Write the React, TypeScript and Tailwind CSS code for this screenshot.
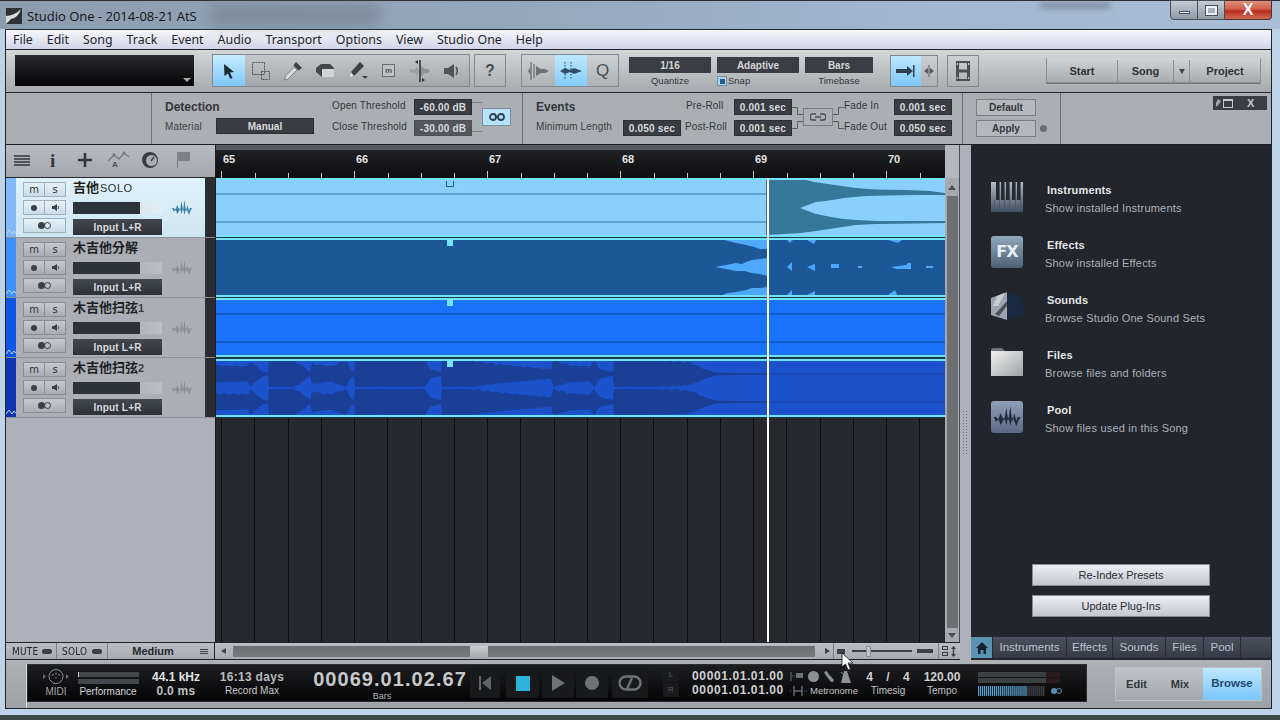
import React from "react";

const cx = (...a: string[]) => a.join(" ");

function envAt(keys: number[][], x: number) {
  for (let i = 0; i < keys.length - 1; i++) {
    if (x >= keys[i][0] && x <= keys[i + 1][0]) {
      const t = (x - keys[i][0]) / (keys[i + 1][0] - keys[i][0] || 1);
      return keys[i][1] + (keys[i + 1][1] - keys[i][1]) * t;
    }
  }
  return 0;
}
function channel(keys: number[][], cy: number, x0: number, x1: number, seed: number) {
  const top: string[] = [];
  const bot: string[] = [];
  for (let x = x0; x <= x1; x += 1) {
    const a = envAt(keys, x);
    const j1 = 0.84 + 0.16 * Math.abs(Math.sin(x * 12.9 + seed));
    const j2 = 0.8 + 0.2 * Math.abs(Math.sin(x * 7.3 + seed * 3));
    top.push(`${x},${(cy - Math.min(a * j1, 13)).toFixed(1)}`);
    bot.unshift(`${x},${(cy + Math.min(a * j2, 13)).toFixed(1)}`);
  }
  return [...top, ...bot].join(" ");
}
const T4 = [[216,9],[248,8],[250,14],[254,10],[262,3],[268,1],[269,15],[292,15],[302,9],[310,2],[312,11],[330,8],[346,14],[350,6],[354,2],[355,15],[400,14],[425,15],[430,5],[441,2],[442,15],[470,14],[500,10],[530,7],[551,5],[553,14],[570,9],[590,8],[594,14],[600,5],[613,2],[614,15],[660,14],[690,12],[705,5],[716,1.5],[767,0.5]].map(([x, a]) => [x - 216, a]);

function Wave1() {
  return (
    <svg className="absolute inset-0" width="729" height="60" viewBox="0 0 729 60">
      <rect x="0" y="15.5" width="551" height="1" fill="#35789a" />
      <rect x="0" y="43.5" width="551" height="1" fill="#35789a" />
      <rect x="550" y="2" width="1" height="55" fill="#35789a" />
      <polygon fill="#35789a" points="551,2 590,2 594,3 598,4 605,5 612,6 626,8 640,10 660,11.5 690,12 714,13 729,15 729,17 700,17 670,17.5 650,18 628,20 610,23 600,24 584,30 600,36 615,39 628,41 640,42 660,43 700,43 729,43 729,45 700,45.5 660,46 640,47 620,50 600,53 585,55 551,57" />
    </svg>
  );
}
function Wave2() {
  return (
    <svg className="absolute inset-0" width="729" height="60" viewBox="0 0 729 60">
      <g fill="#4ea8fb">
        <polygon points="499,29 510,27 520,25 526,26 530,24 536,22 544,21 551,20 551,38 544,36 536,35 528,33 520,33 510,31" />
        <polygon points="509,2 551,2 551,11 544,11 538,9 530,7 520,5 512,3" />
        <polygon points="506,57 551,57 551,49 544,50 536,50 530,52 520,54 512,55" />
        <polygon points="571,29 576,24 576,33" />
        <polygon points="591,29 599,26 599,33" />
        <rect x="615" y="26" width="8" height="4" />
        <rect x="642" y="28" width="4" height="2" />
        <polygon points="675,29 690,27 692,25 695,25 695,31 680,31" />
        <rect x="710" y="28" width="7" height="2" />
        <polygon points="571,2 577,2 574,5" />
        <polygon points="591,2 600,2 598,6" />
        <polygon points="672,2 686,2 682,5" />
        <polygon points="571,57 576,57 576,52" />
        <polygon points="591,57 599,57 599,53" />
        <polygon points="672,57 681,57 679,52" />
      </g>
    </svg>
  );
}
function Wave3() {
  return (
    <svg className="absolute inset-0" width="729" height="60" viewBox="0 0 729 60">
      <rect x="0" y="15.5" width="729" height="1" fill="#12449c" />
      <rect x="0" y="43.5" width="729" height="1" fill="#12449c" />
    </svg>
  );
}
function Wave4() {
  return (
    <svg className="absolute inset-0" width="729" height="60" viewBox="0 0 729 60">
      <rect x="0" y="15.5" width="729" height="1" fill="#1a3f96" />
      <rect x="0" y="43.5" width="729" height="1" fill="#1a3f96" />
      <polygon fill="#1a3f96" points={channel(T4, 16, 0, 551, 1)} />
      <polygon fill="#1a3f96" points={channel(T4, 44, 0, 551, 2)} />
    </svg>
  );
}

function WaveIcon({ color }: { color: string }) {
  return (
    <svg width="20" height="18" viewBox="0 0 20 18">
      <path d="M0 9 L2 9 L3.5 12 L5 6 L6.5 9 L8 12 L9.5 2 L11 12 L12.5 1 L14 13 L15.5 6 L17 12 L18 9 L20 9 L18 13 L17 16 L15.5 12 L14 9 L12.5 16 L11 9 L9.5 15 L8 9 L6.5 13 L5 15 L3.5 9 L2 13 Z" fill={color} />
    </svg>
  );
}

function Track({ name, suffix, strip, head, strong }: { name: string; suffix: string; strip: string; head: string; strong: boolean }) {
  const sb = "border border-[#8a8e93] bg-gradient-to-b from-[#c6c9ce] to-[#a9acb2] flex items-center justify-center";
  const sbA = strong ? "border-[#9fb0b9] from-[#e4f2f8] to-[#c9dde6]" : "";
  return (
    <div className="h-[60px] flex border-b border-[#8d9096]">
      <div className={cx("w-[10px] relative", strip)}>
        <svg className="absolute left-0 bottom-0" width="10" height="9" viewBox="0 0 10 9"><path d="M0 6 L3 2 L6 6 L8 3 L10 5" stroke="#bcd6f5" fill="none" /></svg>
      </div>
      <div className={cx("w-[189px] flex pl-[7px] pt-[4px]", head)}>
        <div className="w-[44px] flex flex-col gap-[3px]">
          <div className="flex h-[15px]">
            <div className={cx("w-[22px] text-[10px] text-[#333] leading-none font-['DejaVu_Sans',sans-serif]", sb, sbA)}>m</div>
            <div className={cx("w-[22px] -ml-px text-[10px] text-[#333] leading-none font-['DejaVu_Sans',sans-serif]", sb, sbA)}>s</div>
          </div>
          <div className="flex h-[15px]">
            <div className={cx("w-[22px]", sb, sbA)}><span className="w-[6px] h-[6px] rounded-full bg-[#3c4046]" /></div>
            <div className={cx("w-[22px] -ml-px", sb, sbA)}>
              <svg width="9" height="9" viewBox="0 0 9 9"><path d="M1 3 H3 L6 1 V8 L3 6 H1 Z" fill="#3c4046" /><path d="M7 3 Q8.2 4.5 7 6" stroke="#3c4046" fill="none" /></svg>
            </div>
          </div>
          <div className={cx("h-[15px] w-[43px] gap-0", sb, sbA)}>
            <span className="w-[7px] h-[7px] rounded-full bg-[#3c4046]" />
            <span className="w-[7px] h-[7px] rounded-full border border-[#3c4046] -ml-px" />
          </div>
        </div>
        <div className="w-[89px] ml-[6px] flex flex-col">
          <div className="h-[16px] leading-[13px] text-[13px] font-bold text-[#1d1f22] font-['Liberation_Sans','Noto_Sans_CJK_TC',sans-serif] whitespace-nowrap -mt-[1px]">
            {name}<span className={suffix === "SOLO" ? "text-[11px] font-normal tracking-[0.5px] ml-[1px] text-[#2b2e33]" : "text-[11px] text-[#3a3d42]"}>{suffix}</span>
          </div>
          <div className={cx("h-[12px] mt-[5px] flex", strong ? "bg-gradient-to-r from-[#c9d8df] to-[#e0eef3]" : "bg-gradient-to-r from-[#92959b] to-[#bcbfc4]")}>
            <div className="w-[67px] bg-[#2e3339]" />
          </div>
          <div className="h-[16px] mt-[5px] bg-gradient-to-b from-[#43474e] to-[#2e3138] text-[#d9dadc] text-[10px] font-bold flex items-center justify-center tracking-[0.2px]">Input L+R</div>
        </div>
        <div className="ml-[10px] mt-[17px] h-[18px]"><WaveIcon color={strong ? "#3b7ea6" : "#8b8e94"} /></div>
      </div>
      <div className="w-[10px] bg-[#2b2d33]" />
    </div>
  );
}

function Clip({ body, children, offset }: { body: string; children: React.ReactNode; offset?: boolean }) {
  return (
    <div className={cx("h-[60px] relative flex flex-col bg-[#123a48]", offset ? "pt-px" : "")}>
      <div className={cx("flex-1 border-t-2 border-b-2 border-[#74e2f7] mb-px", body)} />
      {children}
    </div>
  );
}

function Handle({ hollow, top }: { hollow?: boolean; top: string }) {
  return hollow ? (
    <div className={cx("absolute left-[230px] w-[8px] h-[6px] border-x border-b border-[#1b6a8a] z-10", top)} />
  ) : (
    <div className={cx("absolute left-[231px] w-[6px] h-[6px] bg-[#74e2f7] z-10", top)} />
  );
}

function Ruler() {
  const ticks = Array.from({ length: 24 }, (_, i) => i);
  return (
    <div className="h-[33px] flex flex-col relative overflow-hidden">
      <div className="h-[5px] bg-[#575a62]" />
      <div className="flex-1 bg-gradient-to-b from-[#1f2023] to-[#0f0f11] flex pl-[7px]">
        {["65", "66", "67", "68", "69", "70"].map((n) => (
          <div key={n} className="w-[133px] shrink-0 text-[11px] font-bold text-[#e2e2e2] pt-[3px] leading-[13px]">{n}</div>
        ))}
      </div>
      <svg className="absolute left-0 bottom-0" width="729" height="8" viewBox="0 0 729 8">
        {ticks.map((i) => (
          <rect key={i} x={Math.round(5.3 + i * 33.25)} y={i % 4 === 0 ? 1 : 3} width="1" height={i % 4 === 0 ? 7 : 5} fill="#c9c9c9" />
        ))}
      </svg>
    </div>
  );
}

const toolBtn = "flex items-center justify-center h-full";

function Toolbar() {
  return (
    <div className="h-[43px] flex bg-gradient-to-b from-[#d4d7d8] to-[#a6aaae] border-b border-[#24262a] text-[#33373c] pt-[4px]">
      <div className="w-[179px] h-[31px] ml-[9px] mt-px bg-gradient-to-b from-[#2b2c2f] to-[#060607] relative shrink-0">
        <span className="absolute right-[3px] bottom-[4px] w-0 h-0 border-x-[4px] border-x-transparent border-t-[4px] border-t-[#aaa]" />
      </div>
      <div className="ml-[18px] w-[258px] h-[33px] flex border border-[#85898d] bg-gradient-to-b from-[#c5c8ca] to-[#a3a7ab] shrink-0">
        <div className={cx(toolBtn, "w-[32px] bg-gradient-to-b from-[#c7ebff] to-[#7cc8f9]")}>
          <svg width="14" height="16" viewBox="0 0 14 16"><path d="M2 1 L12 9 L8 9.5 L10.5 15 L8 15.8 L6 10.5 L2.5 13 Z" fill="#1c2a36" /></svg>
        </div>
        <div className={cx(toolBtn, "w-[32px]")}>
          <svg width="20" height="20" viewBox="0 0 20 20" fill="none" stroke="#4b4f54" strokeDasharray="2 1"><rect x="1.5" y="1.5" width="12" height="12" /><rect x="10.5" y="10.5" width="8" height="8" /></svg>
        </div>
        <div className={cx(toolBtn, "w-[32px]")}>
          <svg width="20" height="20" viewBox="0 0 20 20"><path d="M13 1 L19 7 L15.5 9.5 L10.5 4.5 Z" fill="#3c4045" /><path d="M11 6 L14 9 L5 18 L1.5 19 L2.5 15 Z" fill="#d6d8da" stroke="#6d7075" strokeWidth=".8" /></svg>
        </div>
        <div className={cx(toolBtn, "w-[32px]")}>
          <svg width="20" height="16" viewBox="0 0 20 16"><path d="M1 5 L6 1 L15 1 L19 5 L19 14 L7 14 L1 9 Z" fill="#43474c" /><path d="M7 6 H19 V14 H7 Z" fill="#d2d4d6" /></svg>
        </div>
        <div className={cx(toolBtn, "w-[33px]")}>
          <svg width="22" height="20" viewBox="0 0 22 20"><path d="M13 1 L17 5 L7 15 L2 17 L4 11 Z" fill="#3e4247" /><path d="M4 11 L7 15 L2 17 Z" fill="#dfe1e2" /><path d="M15 15 H21 L18 18 Z" fill="#3e4247" /></svg>
        </div>
        <div className={cx(toolBtn, "w-[29px]")}>
          <span className="w-[13px] h-[13px] border border-[#6a6e73] bg-[#bfc2c5] flex items-center justify-center"><span className="text-[8px] leading-none text-[#555] font-bold">m</span></span>
        </div>
        <div className={cx(toolBtn, "w-[33px]")}>
          <svg width="24" height="24" viewBox="0 0 24 24"><rect x="11" y="1" width="2" height="22" fill="#4b4f54" /><path d="M1 12 L4 10 L6 11 L9 8 L11 12 L9 16 L6 13 L4 14 Z" fill="#9a9da1" /><path d="M13 7 L17 10 L20 10 L22 12 L20 14 L17 14 L13 17 Z" fill="#8f9296" /><path d="M10 1 V5 L7 3 Z" fill="#33373c" /><path d="M14 19 V23 L17 21 Z" fill="#33373c" /></svg>
        </div>
        <div className={cx(toolBtn, "w-[32px]")}>
          <svg width="18" height="16" viewBox="0 0 18 16"><path d="M1 5 H5 L11 1 V15 L5 11 H1 Z" fill="#50545a" /><path d="M13 4 Q15.5 8 13 12" stroke="#50545a" strokeWidth="1.6" fill="none" /></svg>
        </div>
      </div>
      <div className="ml-[4px] w-[32px] h-[33px] border border-[#85898d] flex items-center justify-center text-[16px] font-bold text-[#4a4e53] shrink-0">?</div>
      <div className="ml-[15px] w-[98px] h-[33px] flex border border-[#85898d] shrink-0">
        <div className={cx(toolBtn, "w-[33px]")}>
          <svg width="22" height="18" viewBox="0 0 22 18"><path d="M3 0 V18 M6 2 V16" stroke="#5a5e63" /><path d="M0 9 L2.5 5 V13 Z M8 4 L13 7 H17 L21 9 L17 11 H13 L8 14 Z" fill="#6e7277" /></svg>
        </div>
        <div className={cx(toolBtn, "w-[32px] bg-gradient-to-b from-[#bde7ff] to-[#82cdfa]")}>
          <svg width="24" height="18" viewBox="0 0 24 18"><path d="M1 9 L6 6 L11 8 L15 6 L23 9 L15 12 L11 10 L6 12 Z" fill="#33506a" /><path d="M6 0 V18 M12 0 V18" stroke="#2a3a48" strokeDasharray="1.5 1.5" /></svg>
        </div>
        <div className={cx(toolBtn, "flex-1 text-[17px] text-[#4b4f54]")}>Q</div>
      </div>
      <div className="ml-[10px] w-[82px] shrink-0 flex flex-col items-center mt-[3px]">
        <div className="w-full h-[16px] bg-[#3a3e44] text-[#d4d5d6] text-[10px] font-bold flex items-center justify-center">1/16</div>
        <div className="text-[9.5px] mt-[2px] leading-[12px]">Quantize</div>
      </div>
      <div className="ml-[6px] w-[82px] shrink-0 flex flex-col mt-[3px]">
        <div className="w-full h-[16px] bg-[#3a3e44] text-[#d4d5d6] text-[10px] font-bold flex items-center justify-center">Adaptive</div>
        <div className="flex items-center mt-[2px] h-[12px] text-[9.5px]">
          <span className="w-[10px] h-[10px] border border-[#7a8d9b] bg-[#a9d4ee] flex items-center justify-center mr-[1px]"><span className="w-[5px] h-[5px] bg-[#23608f]" /></span>Snap
        </div>
      </div>
      <div className="ml-[6px] w-[68px] shrink-0 flex flex-col items-center mt-[3px]">
        <div className="w-full h-[16px] bg-[#3a3e44] text-[#d4d5d6] text-[10px] font-bold flex items-center justify-center">Bars</div>
        <div className="text-[9.5px] mt-[2px] leading-[12px]">Timebase</div>
      </div>
      <div className="ml-[17px] mt-px w-[48px] h-[32px] flex border border-[#85898d] shrink-0">
        <div className={cx(toolBtn, "w-[30px] bg-gradient-to-b from-[#bde7ff] to-[#7cc8f9]")}>
          <svg width="20" height="12" viewBox="0 0 20 12"><path d="M0 4 H11 V1 L17 6 L11 11 V8 H0 Z" fill="#33404c" /><rect x="17" y="0" width="1.5" height="12" fill="#33404c" /></svg>
        </div>
        <div className={cx(toolBtn, "flex-1")}>
          <svg width="10" height="12" viewBox="0 0 10 12"><path d="M5 0 V12" stroke="#55595e" /><path d="M0 6 L4 3 V9 Z M10 6 L6 3 V9 Z" fill="#55595e" /></svg>
        </div>
      </div>
      <div className="ml-[9px] mt-px w-[32px] h-[32px] border border-[#85898d] flex items-center justify-center shrink-0">
        <svg width="14" height="20" viewBox="0 0 14 20"><path fillRule="evenodd" d="M0 0 H14 V20 H0 Z M3 2 V8.5 H11 V2 Z M3 11.5 V18 H11 V11.5 Z M.8 2 V4 H2 V2 Z M12 2 V4 H13.2 V2 Z M.8 16 V18 H2 V16 Z M12 16 V18 H13.2 V16 Z" fill="#4b4f54" /></svg>
      </div>
      <div className="ml-[67px] w-[215px] h-[25px] mt-[4px] pt-[2px] flex border-x border-b border-[#8b8e92] bg-gradient-to-b from-[#d2d5d6] to-[#a8acaf] text-[11px] font-bold text-[#2e3135] shrink-0 rounded-[1px] shadow-[0_1px_0_#777]">
        <div className="w-[71px] flex items-center justify-center border-r border-[#8b8e92]">Start</div>
        <div className="w-[56px] flex items-center justify-center border-r border-[#8b8e92]">Song</div>
        <div className="w-[16px] flex items-center justify-center border-r border-[#8b8e92]"><span className="w-0 h-0 border-x-[3.5px] border-x-transparent border-t-[5px] border-t-[#41454a]" /></div>
        <div className="flex-1 flex items-center justify-center">Project</div>
      </div>
    </div>
  );
}

const valBox = "bg-[#393d43] border border-[#2a2d31] text-[#d8d9da] text-[10px] font-bold flex items-center justify-center tracking-[0.2px] w-[58px] h-[16px] shrink-0";
const lbl = "text-[10px] text-[#33373c] leading-[12px] whitespace-nowrap tracking-[0.15px]";

function Inspector() {
  return (
    <div className="h-[52px] flex bg-[#abafb4] border-b border-[#1d1f23]">
      <div className="w-[146px] border-r border-[#6f7378] shrink-0" />
      <div className="w-[371px] border-r border-[#6f7378] shrink-0 flex pl-[13px]">
        <div className="w-[149px] shrink-0">
          <div className="text-[12px] font-bold text-[#33373c] mt-[7px] leading-[14px]">Detection</div>
          <div className="flex items-center mt-[4px]">
            <span className="text-[10px] text-[#3c4045] w-[51px] tracking-[0.15px]">Material</span>
            <div className="w-[98px] h-[16px] bg-[#393d43] border border-[#2a2d31] text-[#d8d9da] text-[10px] font-bold flex items-center justify-center">Manual</div>
          </div>
        </div>
        <div className="w-[82px] ml-[18px] pt-[7px] flex flex-col gap-[9px] shrink-0">
          <div className={lbl}>Open Threshold</div>
          <div className={lbl}>Close Threshold</div>
        </div>
        <div className="flex flex-col gap-[5px] pt-[6px] shrink-0">
          <div className={valBox}>-60.00 dB</div>
          <div className={cx(valBox, "bg-[#53575d] text-[#74787d] border-[#4b4f54]")}>-30.00 dB</div>
        </div>
        <div className="ml-[10px] mt-[15px] w-[29px] h-[18px] bg-[#b6e2fa] border border-[#7a8d9b] flex items-center justify-center shrink-0 relative">
          <svg className="absolute -left-[11px] -top-[7px] -z-0" width="27" height="32" viewBox="0 0 27 32" fill="none" stroke="#7b7f84"><path d="M0 .5 H10 M0 29.5 H10" /></svg>
          <svg className="relative" width="16" height="8" viewBox="0 0 16 8" fill="none" stroke="#2d4253" strokeWidth="1.8"><rect x="1" y="1" width="6" height="6" rx="3" /><rect x="9" y="1" width="6" height="6" rx="3" /><path d="M6 4 H10" /></svg>
        </div>
      </div>
      <div className="w-[440px] border-r border-[#6f7378] shrink-0 flex pl-[13px]">
        <div className="w-[87px] shrink-0">
          <div className="text-[12px] font-bold text-[#33373c] mt-[7px] leading-[14px]">Events</div>
          <div className="text-[10px] text-[#3c4045] mt-[7px] leading-[12px] whitespace-nowrap tracking-[0.15px]">Minimum Length</div>
        </div>
        <div className={cx(valBox, "mt-[27px]")}>0.050 sec</div>
        <div className="w-[53px] pl-[4px] pt-[7px] flex flex-col gap-[9px] shrink-0">
          <div className={cx(lbl, "pl-[1px]")}>Pre-Roll</div>
          <div className={lbl}>Post-Roll</div>
        </div>
        <div className="flex flex-col gap-[5px] pt-[6px] shrink-0">
          <div className={valBox}>0.001 sec</div>
          <div className={valBox}>0.001 sec</div>
        </div>
        <svg className="mt-[10px] shrink-0" width="11" height="30" viewBox="0 0 11 30" fill="none" stroke="#5b5f64"><path d="M0 4.5 H5.5 V11.5 H11 M0 25.5 H5.5 V18.5 H11" /></svg>
        <div className="mt-[15px] w-[30px] h-[18px] border border-[#7b7f84] flex items-center justify-center shrink-0">
          <svg width="16" height="8" viewBox="0 0 16 8" fill="none" stroke="#4b4f54" strokeWidth="1.4"><path d="M6 1 H3 A3 3 0 0 0 3 7 H6 M10 1 H13 A3 3 0 0 1 13 7 H10 M5 4 H11" /></svg>
        </div>
        <svg className="mt-[10px] shrink-0" width="11" height="30" viewBox="0 0 11 30" fill="none" stroke="#5b5f64"><path d="M0 11.5 H5.5 V4.5 H11 M0 18.5 H5.5 V25.5 H11" /></svg>
        <div className="w-[50px] pt-[7px] flex flex-col gap-[9px] shrink-0">
          <div className={lbl}>Fade In</div>
          <div className={lbl}>Fade Out</div>
        </div>
        <div className="flex flex-col gap-[5px] pt-[6px] shrink-0">
          <div className={valBox}>0.001 sec</div>
          <div className={valBox}>0.050 sec</div>
        </div>
      </div>
      <div className="w-[98px] border-r border-[#6f7378] shrink-0 pl-[13px] pt-[6px] flex flex-col gap-[4px]">
        <div className="w-[60px] h-[17px] border border-[#7b7f84] bg-[#b5b8bc] text-[10px] font-bold text-[#33373c] flex items-center justify-center">Default</div>
        <div className="w-[60px] h-[17px] border border-[#7b7f84] bg-[#b5b8bc] text-[10px] font-bold text-[#33373c] flex items-center justify-center relative">Apply
          <span className="absolute -right-[12px] top-[4px] w-[7px] h-[7px] rounded-full bg-[#6a6e73]" />
        </div>
      </div>
      <div className="flex-1 flex justify-end pr-[4px] pt-[3px]">
        <div className="w-[54px] h-[14px] bg-[#3a3e44] flex items-center text-[#c7c9cc] pl-[2px]">
          <svg width="7" height="10" viewBox="0 0 7 10"><path d="M3 1 L6 3 L4 6 L1 9 L1 5 Z" fill="#a6a9ad" /></svg>
          <span className="w-[10px] h-[9px] border border-[#c7c9cc] border-t-2 ml-[1px]" />
          <span className="ml-[14px] text-[11px] font-bold leading-none">X</span>
        </div>
      </div>
    </div>
  );
}

function BottomBar() {
  return (
    <div className="h-[18px] flex bg-gradient-to-b from-[#babdc3] to-[#a8abb2] border-y border-[#22242a] text-[#26282c]">
      <div className="w-[51px] border-r border-[#7d8086] flex items-center pl-[6px] text-[10px] tracking-[0.2px] font-['DejaVu_Sans',sans-serif] shrink-0">
        <span className="scale-x-90 origin-left">MUTE</span><span className="w-[10px] h-[5px] bg-[#3c4046] rounded-[2px] ml-[1px]" />
      </div>
      <div className="w-[51px] border-r border-[#7d8086] flex items-center pl-[5px] text-[10px] tracking-[0.2px] font-['DejaVu_Sans',sans-serif] shrink-0">
        <span className="scale-x-90 origin-left">SOLO</span><span className="w-[10px] h-[5px] bg-[#3c4046] rounded-[2px] ml-[2px]" />
      </div>
      <div className="w-[107px] border-r border-[#22242a] flex items-center shrink-0">
        <span className="w-[90px] text-center text-[11px] font-bold">Medium</span>
        <span className="w-[8px] ml-[2px] flex flex-col gap-px">
          <span className="h-px bg-[#3c4046]" /><span className="h-px bg-[#3c4046]" /><span className="h-px bg-[#3c4046]" />
        </span>
      </div>
      <div className="w-[618px] flex items-center shrink-0 pl-[6px] gap-[4px]">
        <span className="w-0 h-0 border-y-[3.5px] border-y-transparent border-r-[5px] border-r-[#3f4348]" />
        <div className="w-[582px] ml-[3px] h-[11px] bg-gradient-to-b from-[#6b6e72] to-[#77797d] flex pl-[237px]">
          <div className="w-[18px] h-full bg-gradient-to-b from-[#c9ccd0] to-[#a9acb0]" />
        </div>
        <span className="w-0 h-0 border-y-[3.5px] border-y-transparent border-l-[5px] border-l-[#3f4348] ml-[6px]" />
      </div>
      <div className="w-[127px] border-l border-[#7d8086] flex items-center pl-[3px] shrink-0">
        <span className="w-[8px] h-[5px] bg-[#3c4046] shrink-0" />
        <div className="w-[60px] h-[2px] bg-[#3c4046] ml-[7px] flex pl-[14px] items-center shrink-0">
          <span className="w-[5px] h-[11px] bg-[#c3c6c9] border border-[#8a8d92] shrink-0" />
        </div>
        <span className="w-[16px] h-[4px] bg-[#3c4046] ml-[5px] shrink-0" />
        <span className="h-full border-l border-[#7d8086] ml-[5px] flex items-center pl-[3px] gap-[2px] shrink-0">
          <svg width="7" height="10" viewBox="0 0 7 10" fill="none" stroke="#3c4046"><rect x=".5" y=".5" width="5" height="3" /><rect x=".5" y="6.5" width="5" height="3" /></svg>
          <svg width="5" height="11" viewBox="0 0 5 11"><path d="M2.5 0 L5 3 H3.2 V8 H5 L2.5 11 L0 8 H1.8 V3 H0 Z" fill="#3c4046" /></svg>
        </span>
      </div>
    </div>
  );
}

function RightPanel() {
  const items: [string, string, React.ReactNode][] = [
    ["Instruments", "Show installed Instruments", (
      <svg width="32" height="32" viewBox="0 0 32 32">
        <defs><linearGradient id="pk" x1="0" y1="0" x2="0" y2="1"><stop offset="0" stopColor="#b4bcc6" /><stop offset="1" stopColor="#3f4f63" /></linearGradient></defs>
        <rect x="0" y="1" width="32" height="30" fill="url(#pk)" />
        {[5, 10, 15, 21, 26].map((x) => <rect key={x} x={x} y="1" width="3.6" height="18" fill="#262a31" />)}
        {[3, 8, 13, 18, 24, 29].map((x) => <rect key={x} x={x} y="19" width=".8" height="12" fill="#4b5563" />)}
      </svg>
    )],
    ["Effects", "Show installed Effects", (
      <div className="w-[32px] h-[32px] rounded-[3px] bg-gradient-to-b from-[#90a8bd] to-[#4e6275] flex items-center justify-center text-[#e6eef5] text-[16px] font-black leading-none font-['DejaVu_Sans',sans-serif] tracking-[-1px]">FX</div>
    )],
    ["Sounds", "Browse Studio One Sound Sets", (
      <svg width="32" height="30" viewBox="0 0 32 30">
        <path d="M0 6 L16 0 L16 28 L0 23 Z" fill="#9ea4ab" />
        <path d="M16 0 L32 6 L32 23 L16 28 Z" fill="#1a2a42" />
        <path d="M4 22 L16 9 L16 14 L8 24 Z" fill="#4d5157" />
        <path d="M6 4 L14 1 L7 14 L2 14 Z" fill="#c9cdd2" />
      </svg>
    )],
    ["Files", "Browse files and folders", (
      <svg width="32" height="28" viewBox="0 0 32 28">
        <defs><linearGradient id="fo" x1="0" y1="0" x2="1" y2="1"><stop offset="0" stopColor="#f0f0f0" /><stop offset="1" stopColor="#9fa2a5" /></linearGradient></defs>
        <path d="M0 2 Q0 0 2 0 H11 L14 3 V6 H0 Z" fill="#6e7277" />
        <rect x="0" y="3" width="32" height="25" fill="url(#fo)" />
      </svg>
    )],
    ["Pool", "Show files used in this Song", (
      <div className="w-[32px] h-[32px] rounded-[3px] bg-gradient-to-b from-[#8fa0b8] to-[#5a6a85] flex items-center justify-center">
        <svg width="28" height="24" viewBox="0 0 20 18"><path d="M0 9 L2 9 L3.5 12 L5 6 L6.5 9 L8 12 L9.5 2 L11 12 L12.5 1 L14 13 L15.5 6 L17 12 L18 9 L20 9 L18 13 L17 16 L15.5 12 L14 9 L12.5 16 L11 9 L9.5 15 L8 9 L6.5 13 L5 15 L3.5 9 L2 13 Z" fill="#1f2a3d" /></svg>
      </div>
    )],
  ];
  return (
    <div className="flex-1 flex flex-col bg-[#22252c] min-w-0">
      <div className="flex-1 flex flex-col pt-[36px] pl-[20px]">
        {items.map(([t, s, icon]) => (
          <div key={t} className="h-[55px] flex">
            <div className="w-[32px] h-[32px] flex items-center justify-center shrink-0">{icon}</div>
            <div className="ml-[22px] flex flex-col">
              <div className="text-[11px] font-bold text-[#e4e5e7] leading-[14px] mt-[2px] ml-[2px] tracking-[0.15px]">{t}</div>
              <div className="text-[11px] text-[#adb0b6] leading-[14px] mt-[4px] tracking-[0.2px] whitespace-nowrap">{s}</div>
            </div>
          </div>
        ))}
      </div>
      <div className="flex flex-col items-center gap-[9px] mb-[20px] w-[300px]">
        {["Re-Index Presets", "Update Plug-Ins"].map((t) => (
          <div key={t} className="w-[178px] h-[22px] bg-gradient-to-b from-[#eceef2] to-[#c4c7ce] text-[#2b2e33] text-[11px] flex items-center justify-center border border-[#8a8d92]">{t}</div>
        ))}
      </div>
      <div className="h-[21px] mb-[2px] flex bg-gradient-to-b from-[#4b515c] to-[#363a44] text-[#bcc2cc] text-[11.5px]">
        <div className="w-[22px] bg-[#5b93b2] flex items-center justify-center border-r border-[#2a2d33]">
          <svg width="12" height="12" viewBox="0 0 12 12"><path d="M6 0 L12 6 H10 V12 H7.5 V8 H4.5 V12 H2 V6 H0 Z" fill="#14232e" /></svg>
        </div>
        {[["Instruments", "w-[74px]"], ["Effects", "w-[46px]"], ["Sounds", "w-[53px]"], ["Files", "w-[38px]"], ["Pool", "w-[37px]"]].map(([t, w]) => (
          <div key={t} className={cx(w, "flex items-center justify-center border-r border-[#2a2d33]")}>{t}</div>
        ))}
      </div>
    </div>
  );
}

function TBtn({ children, w }: { children: React.ReactNode; w: string }) {
  return <div className={cx(w, "h-[30px] bg-[#18191b] rounded-[2px] flex items-center justify-center shrink-0")}>{children}</div>;
}

function Transport() {
  const c = "flex flex-col items-center shrink-0";
  return (
    <div className="h-[48px] flex bg-gradient-to-b from-[#aeb2b6] to-[#9ea2a6] pt-[4px]">
      <div className="w-[21px] border-r border-[#d5d7d9] shrink-0" />
      <div className="w-[1060px] h-[38px] bg-gradient-to-b from-[#1d1e20] to-[#060607] border border-[#2a2c30] flex text-[#c9cacc] shrink-0">
        <div className={cx(c, "w-[40px] ml-[8px] pt-[3px]")}>
          <svg width="28" height="17" viewBox="0 0 28 17"><circle cx="14" cy="8.5" r="7" fill="none" stroke="#8c8f93" /><circle cx="11" cy="7" r=".8" fill="#8c8f93" /><circle cx="14" cy="5.5" r=".8" fill="#8c8f93" /><circle cx="17" cy="7" r=".8" fill="#8c8f93" /><circle cx="14" cy="10" r=".8" fill="#8c8f93" /><path d="M1 6 L4 8.5 L1 11 Z M24 6 L27 8.5 L24 11 Z" fill="#6c6f73" /></svg>
          <div className="text-[10px] leading-[12px] mt-[1px] text-[#a5a7aa]">MIDI</div>
        </div>
        <div className={cx(c, "w-[62px] ml-[1px] pt-[7px]")}>
          <div className="w-[61px] h-[5px] bg-[#44474b] border-l border-[#ccc]" />
          <div className="w-[61px] h-[5px] bg-[#44474b] mt-[2px]" />
          <div className="text-[10px] leading-[12px] mt-[2px] text-[#d3d4d6] whitespace-nowrap">Performance</div>
        </div>
        <div className={cx(c, "w-[60px] ml-[7px] pt-[5px]")}>
          <div className="text-[12px] font-bold leading-[14px] text-[#e2e2e3] whitespace-nowrap">44.1 kHz</div>
          <div className="text-[12px] font-bold leading-[14px] text-[#c0c1c3] whitespace-nowrap tracking-[0.3px]">0.0 ms</div>
        </div>
        <div className={cx(c, "w-[72px] ml-[10px] pt-[5px]")}>
          <div className="text-[12px] font-bold leading-[14px] text-[#b9babc] tracking-[0.3px] whitespace-nowrap">16:13 days</div>
          <div className="text-[10px] leading-[14px] text-[#c9cacc] whitespace-nowrap">Record Max</div>
        </div>
        <div className={cx(c, "w-[160px] ml-[22px] pt-[2px]")}>
          <div className="text-[20px] font-bold leading-[24px] tracking-[1.05px] text-[#c7c8ca] whitespace-nowrap">00069.01.02.67</div>
          <div className="text-[9px] leading-[10px] text-[#b0b2b4] mr-[16px]">Bars</div>
        </div>
        <div className="flex items-center shrink-0">
          <TBtn w="w-[30px]"><svg width="12" height="14" viewBox="0 0 12 14"><rect width="2" height="14" fill="#5f6266" /><path d="M12 0 V14 L3 7 Z" fill="#5f6266" /></svg></TBtn>
          <div className="w-[6px] shrink-0" />
          <TBtn w="w-[33px]"><span className="w-[14px] h-[15px] bg-[#2cb4dc]" /></TBtn>
          <div className="w-[3px] shrink-0" />
          <TBtn w="w-[32px]"><svg width="13" height="16" viewBox="0 0 13 16"><path d="M0 0 L13 8 L0 16 Z" fill="#6f7277" /></svg></TBtn>
          <div className="w-[2px] shrink-0" />
          <TBtn w="w-[32px]"><span className="w-[14px] h-[14px] rounded-full bg-[#6f7277]" /></TBtn>
          <div className="w-[4px] shrink-0" />
          <TBtn w="w-[36px]"><svg width="24" height="16" viewBox="0 0 24 16" fill="none" stroke="#6f7277" strokeWidth="2.4"><rect x="1.5" y="1.5" width="21" height="13" rx="6.5" /><path d="M9 14 L14 3" /></svg></TBtn>
        </div>
        <div className="ml-[15px] w-[16px] flex flex-col gap-px pt-[3px] shrink-0">
          <div className="h-[14px] bg-[#1a1b1d] text-[8px] text-[#55585c] flex items-center justify-center">L</div>
          <div className="h-[14px] bg-[#1a1b1d] text-[8px] text-[#55585c] flex items-center justify-center">R</div>
        </div>
        <div className={cx(c, "ml-[11px] w-[96px] pt-[4px]")}>
          <div className="text-[12px] font-bold leading-[14px] tracking-[0.6px] whitespace-nowrap text-[#cfd0d2]">00001.01.01.00</div>
          <div className="text-[12px] font-bold leading-[14px] tracking-[0.6px] whitespace-nowrap text-[#cfd0d2]">00001.01.01.00</div>
        </div>
        <div className="flex flex-col shrink-0 w-[74px] ml-[4px] pt-[5px]">
          <div className="flex items-center h-[13px] gap-[4px]">
            <svg width="13" height="9" viewBox="0 0 13 9"><path d="M1 0 V9" stroke="#6c6f73" /><rect x="6" y="1" width="7" height="5" fill="#6c6f73" /><path d="M2 4 H6" stroke="#6c6f73" strokeDasharray="1 1" /></svg>
            <span className="w-[11px] h-[11px] rounded-full bg-[#8d9094] ml-[1px]" />
            <svg width="13" height="12" viewBox="0 0 13 12"><path d="M1 1 L4 0 L5.5 3 L11 9 L10 11 L8 11 L3 4.5 Z" fill="#8d9094" /></svg>
            <svg width="12" height="12" viewBox="0 0 12 12"><path d="M4 0 L7 0 L11 12 H1 Z" fill="#8d9094" /><path d="M1 1 L7 7" stroke="#8d9094" /></svg>
          </div>
          <div className="flex items-center h-[14px] mt-px">
            <svg width="17" height="10" viewBox="0 0 17 10"><path d="M0 5 H2 M14 5 H17" stroke="#6c6f73" strokeDasharray="1 1" /><path d="M4 0 V10 M12 0 V10 M4 5 H12" stroke="#8d9094" /></svg>
            <span className="text-[9.5px] text-[#c2c3c5] ml-[3px] whitespace-nowrap leading-[14px]">Metronome</span>
          </div>
        </div>
        <div className={cx(c, "w-[44px] ml-[2px] pt-[5px]")}>
          <div className="text-[12px] font-bold leading-[14px] text-[#cfd0d2] whitespace-pre">{"4    /    4"}</div>
          <div className="text-[10px] leading-[14px] text-[#c2c3c5]">Timesig</div>
        </div>
        <div className={cx(c, "w-[46px] ml-[9px] pt-[5px]")}>
          <div className="text-[12px] font-bold leading-[14px] text-[#cfd0d2]">120.00</div>
          <div className="text-[10px] leading-[14px] text-[#c2c3c5]">Tempo</div>
        </div>
        <div className="w-[84px] ml-[13px] pt-[7px] shrink-0">
          <div className="flex flex-col gap-px w-[68px] relative">
            <div className="flex"><span className="w-[68px] h-[5px] bg-[#3d4043] shrink-0" /><span className="w-[14px] h-[5px] bg-[#2b1a1c] shrink-0" /></div>
            <div className="flex"><span className="w-[68px] h-[5px] bg-[#3d4043] shrink-0" /><span className="w-[14px] h-[5px] bg-[#2b1a1c] shrink-0" /></div>
          </div>
          <div className="flex items-center mt-[3px]">
            <svg width="68" height="10" viewBox="0 0 68 10">
              {Array.from({ length: 34 }, (_, i) => (
                <rect key={i} x={i * 2} y="0" width="1.2" height="10" fill={i < 25 ? "#5ba4d0" : "#45484c"} />
              ))}
            </svg>
            <span className="w-[6px] h-[6px] rounded-full bg-[#5a8fb4] ml-[6px]" />
            <span className="w-[6px] h-[6px] rounded-full border border-[#5a8fb4] -ml-px" />
          </div>
        </div>
      </div>
      <div className="ml-[28px] w-[147px] h-[34px] mt-[3px] flex bg-gradient-to-b from-[#c0c3c7] to-[#a4a8ac] border border-[#bcbfc3] text-[11px] font-bold text-[#33373c] shrink-0">
        <div className="w-[41px] flex items-center justify-center">Edit</div>
        <div className="w-[46px] flex items-center justify-center">Mix</div>
        <div className="flex-1 flex items-center justify-center bg-gradient-to-b from-[#bde7ff] to-[#79c6f9] text-[#1d4a72] text-[11.5px]">Browse</div>
      </div>
    </div>
  );
}

export default function App() {
  const bars = Array.from({ length: 22 }, (_, i) => i);
  return (
    <div className="w-[1280px] h-[720px] relative overflow-hidden flex flex-col font-['Liberation_Sans',sans-serif] bg-[linear-gradient(90deg,#8c9db0_0%,#93a7bc_40%,#a0b6cf_70%,#a9bed6_100%)]">
      <div className="h-[29px] flex items-start shrink-0 relative border-t border-[#2a2d33]">
        <div className="absolute left-[210px] top-[3px] w-[170px] h-[22px] bg-[#6b7686] opacity-50 blur-[7px]" />
        <div className="absolute left-[1040px] top-[2px] w-[70px] h-[5px] bg-[#5f6b7c] opacity-70 blur-[3px]" />
        <svg className="ml-[6px] mt-[7px] relative" width="16" height="16" viewBox="0 0 16 16">
          <rect width="16" height="16" fill="#2e3136" />
          <path d="M0 8 Q8 8 15 1 Q12 10 5 11 L0 16 Z" fill="#d9dde0" />
        </svg>
        <span className="ml-[5px] mt-[6px] text-[13px] leading-[18px] text-[#101317] font-['Open_Sans',sans-serif] relative">Studio One - 2014-08-21 AtS</span>
        <div className="ml-auto mr-[8px] h-[20px] -mt-px flex relative">
          <div className="w-[28px] flex items-center justify-center border border-[#4a4f57] rounded-bl-[4px] bg-gradient-to-b from-[#c4ccd5] to-[#8e99a7]"><span className="w-[11px] h-[3px] bg-[#eef1f4] border border-[#4a4f57] mt-[4px]" /></div>
          <div className="w-[27px] flex items-center justify-center border-y border-r border-[#4a4f57] bg-gradient-to-b from-[#c4ccd5] to-[#8e99a7]"><span className="w-[11px] h-[9px] border-[2px] border-[#eef1f4] outline outline-1 outline-[#4a4f57]" /></div>
          <div className="w-[47px] flex items-center justify-center border-y border-r border-[#4a3230] rounded-br-[4px] bg-[linear-gradient(180deg,#e0917f_0%,#cf5c49_45%,#b92b1c_55%,#cf6a55_100%)] text-white font-bold text-[16px] leading-none">X</div>
        </div>
      </div>
      <div className="h-[686px] flex flex-col shrink-0 bg-[#bcd3e8]">
        <div className="ml-[5px] w-[1267px] h-[680px] flex flex-col border border-[#1f2329] shrink-0 bg-[#aeb1b9]">
          <div className="h-[20px] flex items-center gap-[14px] pl-[7px] pt-[2px] bg-gradient-to-b from-[#f6f7fb] to-[#d3d5e8] border-b border-[#1f2329] text-[12.4px] text-[#22252a] font-['Noto_Sans',sans-serif] shrink-0">
            {["File", "Edit", "Song", "Track", "Event", "Audio", "Transport", "Options", "View", "Studio One", "Help"].map((m) => (
              <span key={m} className="leading-none">{m}</span>
            ))}
          </div>
          <Toolbar />
          <Inspector />
          <div className="h-[515px] flex shrink-0">
            <div className="w-[954px] flex flex-col shrink-0">
              <div className="flex-1 flex min-h-0">
                <div className="w-[209px] flex flex-col shrink-0 bg-[#aeb1b9]">
                  <div className="h-[33px] flex items-center bg-gradient-to-b from-[#b8bbc1] to-[#a3a6ac] border-b border-[#26282c] shrink-0 relative text-[#33373c] pb-[2px]">
                    <svg className="ml-[8px] shrink-0" width="16" height="11" viewBox="0 0 16 11"><path d="M0 1 H16 M0 4 H16 M0 7 H16 M0 10 H16" stroke="#33373c" strokeWidth="1.6" /></svg>
                    <span className="ml-[20px] w-[8px] text-[19px] font-black font-['Liberation_Serif',serif] leading-none shrink-0">i</span>
                    <svg className="ml-[20px] shrink-0" width="14" height="14" viewBox="0 0 14 14"><path d="M7 0 V14 M0 7 H14" stroke="#33373c" strokeWidth="2.6" /></svg>
                    <svg className="ml-[16px] shrink-0" width="22" height="18" viewBox="0 0 22 18"><path d="M0 10 L6 4 L11 8 L16 2 L21 6" stroke="#72767b" fill="none" strokeWidth="1.2" /><circle cx="6" cy="4" r="1.4" fill="#72767b" /><circle cx="16" cy="2" r="1.4" fill="#72767b" /><text x="4" y="16" fontSize="8" fontWeight="700" fill="#4b4f54">A</text></svg>
                    <svg className="ml-[11px] shrink-0" width="18" height="18" viewBox="0 0 18 18"><circle cx="9" cy="9" r="8" fill="#3a3d42" /><circle cx="10.5" cy="9.5" r="5.5" fill="#a9acb2" /><path d="M10 10 L13 6" stroke="#3a3d42" strokeWidth="1.3" /></svg>
                    <svg className="ml-[17px] shrink-0" width="14" height="18" viewBox="0 0 14 18"><path d="M1 1 H14 V10 H2 V17 H1 Z" fill="#7d8086" /></svg>
                  </div>
                  <Track name="吉他" suffix="SOLO" strip="bg-[#82bafc]" head="bg-gradient-to-b from-[#dff2fa] to-[#cfe6f2]" strong />
                  <Track name="木吉他分解" suffix="" strip="bg-[#3f8ffb]" head="bg-[#abafb5]" strong={false} />
                  <Track name="木吉他扫弦" suffix="1" strip="bg-[#0f56e6]" head="bg-[#abafb5]" strong={false} />
                  <Track name="木吉他扫弦" suffix="2" strip="bg-[#1135b0]" head="bg-[#abafb5]" strong={false} />
                  <div className="flex-1 bg-[#aeb1b9]" />
                </div>
                <div className="w-[1px] bg-[#1b1c20] shrink-0" />
                <div className="w-[729px] flex flex-col relative shrink-0">
                  <Ruler />
                  <Clip body="bg-[#8ad0ff]"><Wave1 /><Handle hollow top="top-[3px]" /></Clip>
                  <Clip body="bg-[#1c5797]"><Wave2 /><Handle top="top-[2px]" /></Clip>
                  <Clip body="bg-[#1a73fb]"><Wave3 /><Handle top="top-[2px]" /></Clip>
                  <Clip body="bg-[#1b52cb]" offset><Wave4 /><Handle top="top-[3px]" /></Clip>
                  <div className="flex-1 flex bg-[#26282d] pl-[5px] overflow-hidden">
                    {bars.map((i) => (
                      <div key={i} className="w-[33.25px] shrink-0 border-l border-[#0e0f11]" />
                    ))}
                  </div>
                  <div className="absolute left-[551px] top-[33px] bottom-0 w-[2px] bg-white z-20" />
                </div>
                <div className="w-[15px] flex flex-col items-center bg-[#a6a9af] shrink-0 border-r border-[#4a4d52]">
                  <div className="h-[33px] w-full bg-[#b4b7bd] shrink-0" />
                  <div className="h-[18px] flex items-center justify-center shrink-0"><span className="w-0 h-0 border-x-[4px] border-x-transparent border-b-[5px] border-b-[#4a4e53]" /></div>
                  <div className="flex-1 w-[11px] bg-[#6d6f73]" />
                  <div className="h-[14px] flex items-center justify-center shrink-0"><span className="w-0 h-0 border-x-[4px] border-x-transparent border-t-[5px] border-t-[#4a4e53]" /></div>
                </div>
              </div>
              <BottomBar />
            </div>
            <div className="w-[11px] bg-[#aeb1b9] flex items-center justify-center shrink-0 pt-[62px]">
              <svg width="7" height="46" viewBox="0 0 7 46">
                {Array.from({ length: 15 }, (_, i) => (
                  <g key={i} fill="#6f7278"><rect x="1" y={i * 3} width="1" height="1" /><rect x="4" y={i * 3} width="1" height="1" /></g>
                ))}
              </svg>
            </div>
            <RightPanel />
          </div>
          <Transport />
        </div>
      </div>
      <div className="flex-1 bg-[#3d4a45]" />
      <svg className="absolute left-[841px] top-[652px] z-30" width="13" height="19" viewBox="0 0 13 19">
        <path d="M1 1 L1 15 L4.5 12 L7 18 L9.5 17 L7 11 L12 11 Z" fill="#fff" stroke="#111" strokeWidth=".8" />
      </svg>
    </div>
  );
}
